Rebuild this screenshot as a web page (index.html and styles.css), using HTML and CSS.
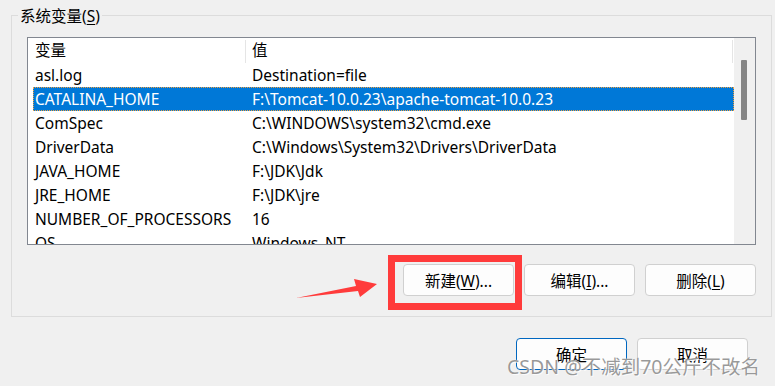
FILE: index.html
```html
<!DOCTYPE html>
<html lang="zh-CN">
<head>
<meta charset="utf-8">
<title>系统变量</title>
<link rel="stylesheet" href="styles.css">
</head>
<body>
<div class="dialog">
  <div class="group">
    <div class="group-title">系统变量(<u>S</u>)</div>
    <div class="listview">
      <div class="lv-body">
        <div class="lv-header">
          <div class="hc1">变量</div>
          <div class="hc2">值</div>
        </div>
        <div class="row"><span class="c1">asl.log</span><span class="c2">Destination=file</span></div>
        <div class="row selected"><span class="c1">CATALINA_HOME</span><span class="c2">F:\Tomcat-10.0.23\apache-tomcat-10.0.23</span></div>
        <div class="row"><span class="c1">ComSpec</span><span class="c2">C:\WINDOWS\system32\cmd.exe</span></div>
        <div class="row"><span class="c1">DriverData</span><span class="c2">C:\Windows\System32\Drivers\DriverData</span></div>
        <div class="row"><span class="c1">JAVA_HOME</span><span class="c2">F:\JDK\Jdk</span></div>
        <div class="row"><span class="c1">JRE_HOME</span><span class="c2">F:\JDK\jre</span></div>
        <div class="row"><span class="c1">NUMBER_OF_PROCESSORS</span><span class="c2">16</span></div>
        <div class="row"><span class="c1">OS</span><span class="c2">Windows_NT</span></div>
      </div>
      <div class="scrollbar"><div class="thumb"></div></div>
    </div>
    <div class="btn-row">
      <button class="btn">新建(<u>W</u>)...</button>
      <button class="btn">编辑(<u>I</u>)...</button>
      <button class="btn">删除(<u>L</u>)</button>
    </div>
  </div>
  <div class="footer">
    <button class="btn default">确定</button>
    <button class="btn">取消</button>
  </div>

  <div class="highlight-box"></div>
  <svg class="arrow" width="775" height="386" viewBox="0 0 775 386">
    <polygon points="296,298 356,286 354,279 377,284 360,297 358,291" fill="#ff3b3b"/>
  </svg>
  <div class="watermark">CSDN @不减到70公斤不改名</div>
</div>
</body>
</html>
```

FILE: styles.css
```css
* { box-sizing: border-box; }
html, body {
  margin: 0;
  padding: 0;
  background: #f0f0f0;
}
body {
  font-family: "Noto Sans", "Noto Sans CJK SC", sans-serif;
  font-size: 15.5px;
  color: #000;
}
.dialog {
  position: relative;
  width: 775px;
  height: 386px;
  overflow: hidden;
  padding-top: 15px;
}
.group {
  margin-left: 11px;
  width: 761px;
  height: 302px;
  border: 1px solid #dcdcdc;
}
.group-title {
  display: block;
  width: fit-content;
  margin-top: -9px;
  margin-left: 6px;
  padding: 0 2px;
  line-height: 18px;
  height: 18px;
  background: #f0f0f0;
}
.group-title u, .btn u { text-underline-offset: 2px; }
.listview {
  display: flex;
  margin-top: 12px;
  margin-left: 15px;
  width: 729px;
  height: 208px;
  border: 1px solid #828790;
  background: #fff;
  overflow: hidden;
}
.lv-body {
  width: 706px;
  flex: none;
}
.lv-header {
  display: flex;
  height: 25px;
}
.hc1 {
  width: 218px;
  padding-left: 7px;
  border-right: 1px solid #e5e5e5;
  margin-top: 2px;
  line-height: 21px;
}
.hc2 {
  width: 487px;
  padding-left: 6px;
  border-right: 1px solid #e5e5e5;
  margin-top: 2px;
  line-height: 21px;
}
.row {
  display: flex;
  height: 24px;
  line-height: 24px;
  margin-left: 5px;
  width: 701px;
  white-space: nowrap;
}
.c1 { width: 217px; padding-left: 2px; flex: none; }
.c2 { padding-left: 2px; }
.row.selected {
  background: #0078d7;
  color: #fff;
  outline: 1px dotted #f0a040;
  outline-offset: -1px;
}
.scrollbar {
  width: 21px;
  flex: none;
  background: #f0f0f0;
  padding: 22px 0 0 7px;
}
.thumb {
  width: 6px;
  height: 60px;
  background: #858585;
  border-radius: 1px;
}
.btn-row {
  display: flex;
  justify-content: flex-end;
  gap: 10px;
  margin-top: 19px;
  padding-right: 15px;
}
.btn {
  width: 111px;
  height: 32px;
  border: 1px solid #d0d0d0;
  border-radius: 4px;
  background: #fdfdfd;
  font-family: inherit;
  font-size: 15.5px;
  color: #000;
  padding: 0;
}
.btn.default { border-color: #0067c0; }
.footer {
  display: flex;
  justify-content: flex-end;
  gap: 10px;
  margin-top: 21px;
  padding-right: 27px;
}
.highlight-box {
  position: absolute;
  left: 388px;
  top: 255px;
  width: 134px;
  height: 55px;
  border: 7px solid #ff3b3b;
}
.arrow {
  position: absolute;
  left: 0;
  top: 0;
}
.watermark {
  position: absolute;
  left: 507px;
  top: 354px;
  font-size: 19.5px;
  line-height: 26px;
  color: rgba(120, 120, 120, 0.75);
  text-shadow: 0 0 1px #fff, 1px 1px 0 rgba(255,255,255,0.8);
  white-space: nowrap;
}
```
